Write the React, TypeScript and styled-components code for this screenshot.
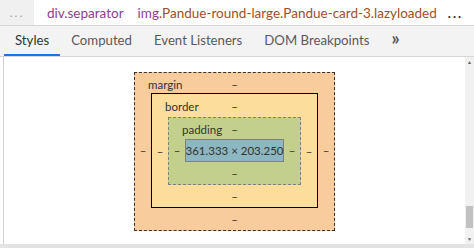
import styled, { createGlobalStyle } from 'styled-components';

const GlobalStyle = createGlobalStyle`
  html, body {
    margin: 0;
    padding: 0;
    background: #ffffff;
  }
  body {
    font-family: Lato, 'Noto Sans', sans-serif;
    color: #333333;
  }
`;

type BoxProps = { $bg: string; $border: string; $top: number; $bottom: number };

const App = () => {
  return (
    <>
      <GlobalStyle />
      <Frame>
        <Crumbs>
          <MoreCrumb>...</MoreCrumb>
          <Crumb>div.separator</Crumb>
          <Crumb $selected>
            <Tag>img</Tag>
            <Classes>.Pandue-round-large.Pandue-card-3.lazyloaded</Classes>
          </Crumb>
          <MoreRight>...</MoreRight>
        </Crumbs>
        <Tabs>
          <Tab $active>Styles</Tab>
          <Tab>Computed</Tab>
          <Tab>Event Listeners</Tab>
          <Tab>DOM Breakpoints</Tab>
          <Tab $chevron>»</Tab>
        </Tabs>
        <Body>
          <Panel>
            <Box $bg="#f9cc9d" $border="1px dashed #333333" $top={20} $bottom={22}>
              <TopRow>
                <Label>margin</Label>
                <Dash>–</Dash>
              </TopRow>
              <MidRow>
                <Side>–</Side>
                <Box $bg="#fddd9b" $border="1px solid #000000" $top={23} $bottom={22}>
                  <TopRow>
                    <Label>border</Label>
                    <Dash>–</Dash>
                  </TopRow>
                  <MidRow>
                    <Side>–</Side>
                    <Box $bg="#c3d08b" $border="1px dashed #808080" $top={21} $bottom={22}>
                      <TopRow>
                        <Label>padding</Label>
                        <Dash>–</Dash>
                      </TopRow>
                      <MidRow>
                        <Side>–</Side>
                        <Content>361.333 × 203.250</Content>
                        <Side>–</Side>
                      </MidRow>
                      <BottomRow>–</BottomRow>
                    </Box>
                    <Side>–</Side>
                  </MidRow>
                  <BottomRow>–</BottomRow>
                </Box>
                <Side>–</Side>
              </MidRow>
              <BottomRow>–</BottomRow>
            </Box>
          </Panel>
          <Scrollbar>
            <Arrow>▲</Arrow>
            <Track>
              <Thumb />
            </Track>
            <Arrow>▼</Arrow>
          </Scrollbar>
        </Body>
        <Footer />
      </Frame>
    </>
  );
};

const Frame = styled.div`
  width: 474px;
  height: 248px;
  display: flex;
  flex-direction: column;
  overflow: hidden;
  background: #ffffff;
`;

const Crumbs = styled.div`
  height: 25px;
  display: flex;
  align-items: center;
  background: #ffffff;
  border-bottom: 1px solid #d6d6d6;
  font-size: 13.5px;
  white-space: nowrap;
  overflow: hidden;
`;

const MoreCrumb = styled.div`
  flex-shrink: 0;
  width: 34px;
  height: 100%;
  display: flex;
  align-items: center;
  justify-content: center;
  background: #f0f0f0;
  color: #a0a0a0;
  font-size: 12px;
  letter-spacing: 2px;
`;

const Crumb = styled.div<{ $selected?: boolean }>`
  flex-shrink: 0;
  padding: 0 7px;
  margin-left: ${(p) => (p.$selected ? '0' : '6px')};
  color: #8a3f8f;
`;

const Tag = styled.span`
  color: #8a3f8f;
`;

const Classes = styled.span`
  color: #9c4f2e;
`;

const MoreRight = styled.div`
  flex-shrink: 0;
  margin-left: 4px;
  color: #333333;
  font-size: 13px;
  font-weight: 700;
  letter-spacing: 2px;
`;

const Tabs = styled.div`
  height: 30px;
  display: flex;
  align-items: stretch;
  padding-left: 4px;
  background: #f3f3f3;
  border-bottom: 1px solid #d6d6d6;
`;

const Tab = styled.div<{ $active?: boolean; $chevron?: boolean }>`
  display: flex;
  align-items: center;
  padding: 0 11px;
  color: ${(p) => (p.$active ? '#333333' : '#5a5a5a')};
  border-bottom: 2px solid ${(p) => (p.$active ? '#1a73e8' : 'transparent')};
  box-sizing: border-box;
  font-size: ${(p) => (p.$chevron ? '18px' : '13.2px')};
  font-weight: ${(p) => (p.$chevron ? 700 : 400)};
  padding-bottom: ${(p) => (p.$chevron ? '4px' : '0')};
`;

const Body = styled.div`
  flex: 1;
  display: flex;
  min-height: 0;
`;

const Panel = styled.div`
  flex: 1;
  display: flex;
  justify-content: center;
  align-items: flex-start;
  padding-top: 15px;
  margin-left: 3px;
  border-left: 1px solid #d0d0d0;
`;

const Box = styled.div<BoxProps>`
  display: flex;
  flex-direction: column;
  background: ${(p) => p.$bg};
  border: ${(p) => p.$border};
  font-size: 11.5px;
  color: #333333;
  & > :first-child {
    height: ${(p) => p.$top}px;
  }
  & > :last-child {
    height: ${(p) => p.$bottom}px;
  }
`;

const TopRow = styled.div`
  display: grid;
  grid-template-columns: 1fr auto 1fr;
  align-items: center;
`;

const Label = styled.div`
  padding-left: 13px;
  padding-top: 2px;
`;

const Dash = styled.div`
  padding-top: 2px;
`;

const MidRow = styled.div`
  display: flex;
  align-items: center;
`;

const Side = styled.div`
  width: 16px;
  text-align: center;
`;

const BottomRow = styled.div`
  display: flex;
  align-items: center;
  justify-content: center;
`;

const Content = styled.div`
  width: 97px;
  height: 21px;
  display: flex;
  align-items: center;
  justify-content: center;
  background: #8cb6c0;
  border: 1px solid #808080;
  font-size: 11.5px;
  white-space: nowrap;
`;

const Scrollbar = styled.div`
  width: 9px;
  display: flex;
  flex-direction: column;
  background: #f1f1f1;
`;

const Arrow = styled.div`
  height: 10px;
  font-size: 5px;
  color: #606060;
  display: flex;
  align-items: center;
  justify-content: center;
`;

const Track = styled.div`
  flex: 1;
  display: flex;
  flex-direction: column;
  justify-content: flex-end;
  padding: 0 1px 6px;
`;

const Thumb = styled.div`
  height: 22px;
  background: #c1c1c1;
`;

const Footer = styled.div`
  height: 4px;
  background: #e3e3e3;
`;

export default App;
